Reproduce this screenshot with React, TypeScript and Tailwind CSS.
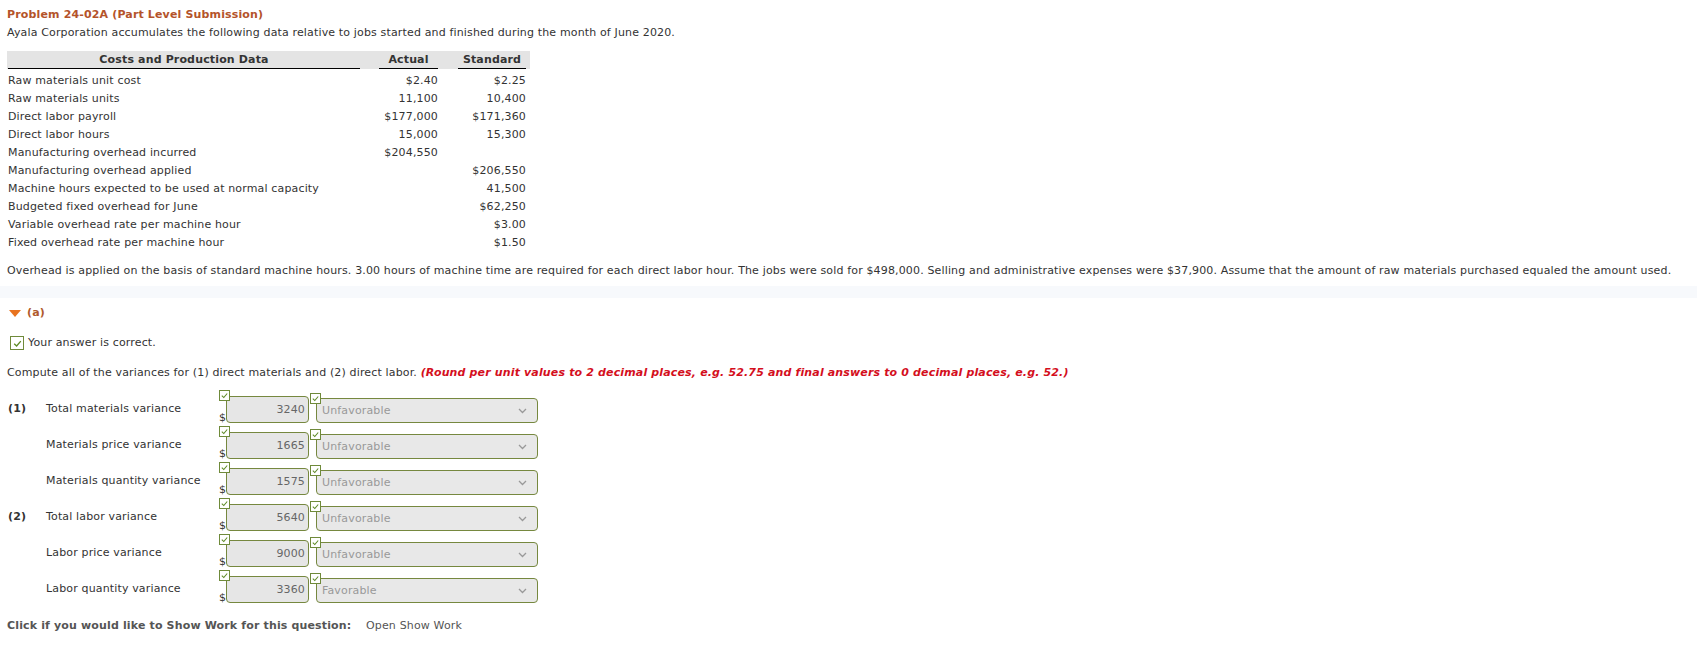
import React from "react";

const costRows: [string, string, string][] = [
  ["Raw materials unit cost", "$2.40", "$2.25"],
  ["Raw materials units", "11,100", "10,400"],
  ["Direct labor payroll", "$177,000", "$171,360"],
  ["Direct labor hours", "15,000", "15,300"],
  ["Manufacturing overhead incurred", "$204,550", ""],
  ["Manufacturing overhead applied", "", "$206,550"],
  ["Machine hours expected to be used at normal capacity", "", "41,500"],
  ["Budgeted fixed overhead for June", "", "$62,250"],
  ["Variable overhead rate per machine hour", "", "$3.00"],
  ["Fixed overhead rate per machine hour", "", "$1.50"],
];

const answerRows: { num?: string; label: string; value: string; choice: string }[] = [
  { num: "(1)", label: "Total materials variance", value: "3240", choice: "Unfavorable" },
  { label: "Materials price variance", value: "1665", choice: "Unfavorable" },
  { label: "Materials quantity variance", value: "1575", choice: "Unfavorable" },
  { num: "(2)", label: "Total labor variance", value: "5640", choice: "Unfavorable" },
  { label: "Labor price variance", value: "9000", choice: "Unfavorable" },
  { label: "Labor quantity variance", value: "3360", choice: "Favorable" },
];

function Check({ size = 11 }: { size?: number }) {
  return (
    <svg width={size - 2} height={size - 2} viewBox="0 0 10 10">
      <path d="M2 5.2 L4.2 7.3 L8 2.8" fill="none" stroke="#5e8a26" strokeWidth="1.2" />
    </svg>
  );
}

function CheckBadge({ className }: { className: string }) {
  return (
    <span
      className={`absolute flex h-[11px] w-[11px] items-center justify-center border border-[#6f8a3a] bg-white ${className}`}
    >
      <Check />
    </span>
  );
}

function AnswerRow({ row }: { row: (typeof answerRows)[number] }) {
  return (
    <div className="flex h-[36px]">
      <div className="flex w-[38px] items-center pt-[2px] font-bold">{row.num}</div>
      <div className="flex w-[173px] items-center pt-[2px]">{row.label}</div>
      <div className="relative flex w-[319px] items-end pb-[3px]">
        <span className="w-[7px] leading-[10px]">$</span>
        <div className="flex h-[27px] w-[83px] items-center justify-end rounded-[4px] border border-[#76883f] bg-[#e6e6e6] pr-[3px] text-[#666]">
          {row.value}
        </div>
        <div className="ml-[7px] flex h-[25px] w-[222px] items-center justify-between rounded-[4px] border border-[#76883f] bg-[#e8e8e8] pl-[5px] pr-[10px] text-[#999]">
          <span>{row.choice}</span>
          <svg width="9" height="6" viewBox="0 0 9 6">
            <path d="M1 1 L4.5 4.5 L8 1" fill="none" stroke="#999" strokeWidth="1.3" />
          </svg>
        </div>
        <CheckBadge className="left-0 top-0" />
        <CheckBadge className="left-[91px] top-[3px]" />
      </div>
    </div>
  );
}

export default function App() {
  return (
    <div className="min-h-[645px] bg-white pt-[7px] font-['DejaVu_Sans','Verdana',sans-serif] text-[11px] leading-[16px] tracking-[0.15px] text-[#333]">
      <div className="px-[7px]">
        <div className="font-bold text-[#b4532a]">Problem 24-02A (Part Level Submission)</div>
        <p className="mt-[2px]">
          Ayala Corporation accumulates the following data relative to jobs started and finished during the month of June 2020.
        </p>

        <div className="mt-[10px] w-[523px]">
          <div className="grid h-[18px] grid-cols-[352px_19px_59px_20px_68px] bg-[#e4e4e4] pl-[1px] font-bold">
            <div className="border-b border-black text-center leading-[17px]">Costs and Production Data</div>
            <div />
            <div className="border-b border-black text-center leading-[17px]">Actual</div>
            <div />
            <div className="border-b border-black text-center leading-[17px]">Standard</div>
          </div>
          <div className="mt-[3px]">
            {costRows.map(([label, actual, standard]) => (
              <div key={label} className="grid h-[18px] grid-cols-[352px_19px_59px_20px_68px] pl-[1px] leading-[18px]">
                <div>{label}</div>
                <div />
                <div className="text-right">{actual}</div>
                <div />
                <div className="text-right">{standard}</div>
              </div>
            ))}
          </div>
        </div>

        <p className="mt-[11px]">
          Overhead is applied on the basis of standard machine hours. 3.00 hours of machine time are required for each direct labor hour. The jobs were sold for $498,000. Selling and administrative expenses were $37,900. Assume that the amount of raw materials purchased equaled the amount used.
        </p>
      </div>

      <div className="mt-[7px] h-[12px] bg-[#f7f9fc]" />

      <div className="px-[7px]">
        <div className="mt-[7px] flex items-center gap-[6px] pl-[2px]">
          <svg width="12" height="7" viewBox="0 0 12 7">
            <path d="M0 0 H12 L6 7 Z" fill="#e8731f" />
          </svg>
          <span className="font-bold text-[#b05a2c]">(a)</span>
        </div>

        <div className="mt-[14px] flex items-center gap-[4px] pl-[3px]">
          <span className="flex h-[14px] w-[14px] items-center justify-center border border-[#6f8a3a] bg-white">
            <Check size={13} />
          </span>
          <span>Your answer is correct.</span>
        </div>

        <p className="mt-[14px]">
          Compute all of the variances for (1) direct materials and (2) direct labor.{" "}
          <span className="font-bold italic text-[#d40f1d]">
            (Round per unit values to 2 decimal places, e.g. 52.75 and final answers to 0 decimal places, e.g. 52.)
          </span>
        </p>

        <div className="mt-[9px] pl-[1px]">
          {answerRows.map((row) => (
            <AnswerRow key={row.label} row={row} />
          ))}
        </div>

        <div className="mt-[12px] flex text-[#555]">
          <span className="w-[359px] font-bold">Click if you would like to Show Work for this question:</span>
          <span>Open Show Work</span>
        </div>
      </div>
    </div>
  );
}
